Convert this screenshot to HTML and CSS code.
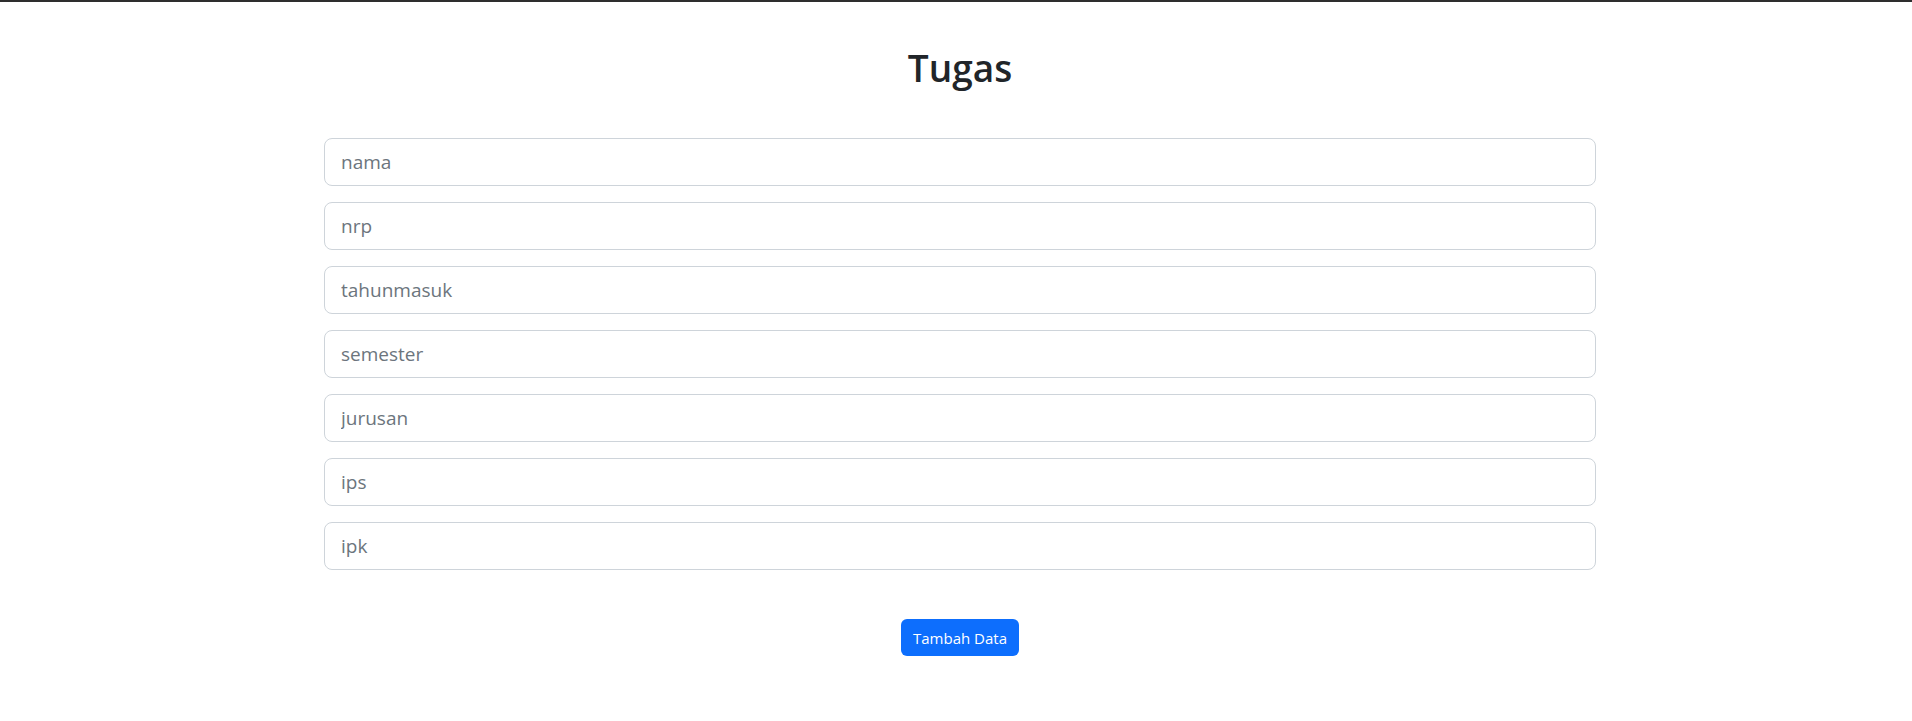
FILE: index.html
```html
<!DOCTYPE html>
<html lang="id">
<head>
    <meta charset="UTF-8">
    <meta name="viewport" content="width=device-width, initial-scale=1.0">
    <title>Tugas</title>
    <link rel="stylesheet" href="styles.css">
</head>
<body>
    <div class="container">
        <h1 class="title">Tugas</h1>

        <form class="form-mahasiswa">
            <div class="fields">
                <input type="text" class="form-control" name="nama" placeholder="nama">
                <input type="text" class="form-control" name="nrp" placeholder="nrp">
                <input type="text" class="form-control" name="tahunmasuk" placeholder="tahunmasuk">
                <input type="text" class="form-control" name="semester" placeholder="semester">
                <input type="text" class="form-control" name="jurusan" placeholder="jurusan">
                <input type="text" class="form-control" name="ips" placeholder="ips">
                <input type="text" class="form-control" name="ipk" placeholder="ipk">
            </div>

            <div class="actions">
                <button type="button" class="btn-primary">Tambah Data</button>
            </div>
        </form>
    </div>
</body>
</html>
```

FILE: styles.css
```css
:root {
    --primary: #0d6efd;
    --dark: #212529;
    --muted: #6c757d;
    --border: #ced4da;
}

* {
    margin: 0;
    padding: 0;
    box-sizing: border-box;
    font-family: 'Open Sans', 'Noto Sans', sans-serif;
}

body {
    background: #fff;
    color: var(--dark);
    border-top: 2px solid #2e2e2e;
    padding-left: 8px;
}

.container {
    width: 1272px;
    margin: 0 auto;
}

.title {
    text-align: center;
    font-size: 37px;
    font-weight: 600;
    line-height: 48px;
    margin-top: 42px;
    margin-bottom: 46px;
    color: var(--dark);
}

.fields {
    display: flex;
    flex-direction: column;
    gap: 16px;
}

.form-control {
    display: block;
    width: 100%;
    height: 48px;
    padding: 0 16px;
    font-size: 19px;
    color: var(--dark);
    background: #fff;
    border: 1px solid var(--border);
    border-radius: 8px;
    outline: none;
}

.form-control::placeholder {
    color: var(--muted);
}

.actions {
    display: flex;
    justify-content: center;
    margin-top: 49px;
}

.btn-primary {
    background-color: var(--primary);
    color: #fff;
    border: none;
    border-radius: 6px;
    height: 37px;
    padding: 0 12px;
    font-size: 15px;
    cursor: pointer;
}
```
